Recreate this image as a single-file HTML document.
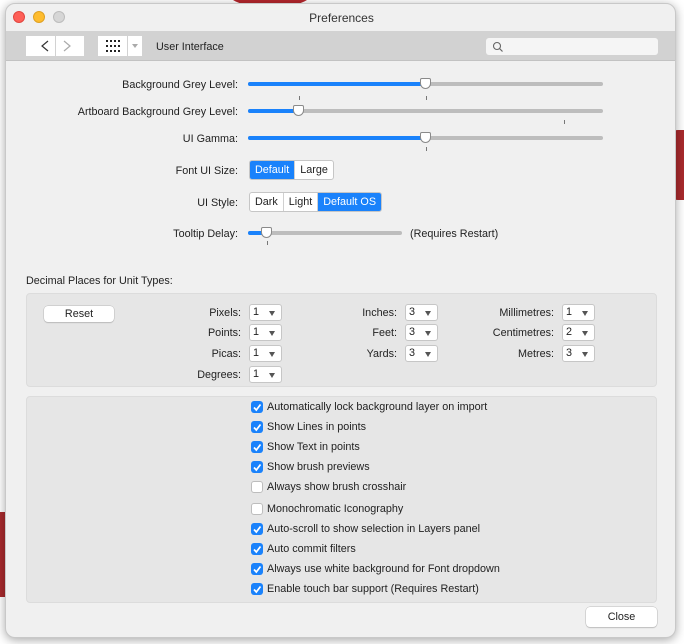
<!DOCTYPE html>
<html><head><meta charset="utf-8"><style>
*{box-sizing:border-box;margin:0;padding:0}
body{width:684px;height:644px;position:relative;background:#fff;font-family:"Liberation Sans",Arial,sans-serif;font-size:10.8px;color:#222;overflow:hidden}
.a{position:absolute}
.win{left:5px;top:3px;width:671px;height:635px;background:#f0f0f0;border-radius:10px;border:1px solid #c8c8c8;box-shadow:0 2px 10px rgba(0,0,0,.35);overflow:hidden}
.lbl{position:absolute;text-align:right;white-space:nowrap}
.track{position:absolute;height:4px;border-radius:2px;background:#bdbdbd}
.fill{position:absolute;height:4px;border-radius:2px;background:#1a82fb}
.thumb{position:absolute;width:11px;height:11px;background:#fff;border:1px solid #8a8a8a;border-radius:2px 2px 6px 6px}
.tick{position:absolute;width:1px;height:4px;background:#777}
.seg{position:absolute;display:flex;border:1px solid #c6c6c6;border-radius:3px;background:#fff;height:20px;overflow:hidden}
.seg div{padding:0 5px;line-height:18px;border-right:1px solid #d0d0d0}
.seg div:last-child{border-right:none}
.seg .on{background:#1a82fb;color:#fff}
.panel{position:absolute;left:20px;width:631px;background:#e6e6e6;border:1px solid #dcdcdc;border-radius:4px}
.dd{position:absolute;width:33px;height:17px;background:#fff;border:1px solid #c6c6c6;border-radius:3px;padding-left:3px;line-height:15px}
.dd:after{content:"";position:absolute;right:6px;top:6px;border-left:3px solid transparent;border-right:3px solid transparent;border-top:5px solid #555}
.cb{position:absolute;left:245px;width:12px;height:12px;border-radius:3px}
.cb.on{background:#1a82fb}
.cb.off{background:#fff;border:1px solid #bdbdbd}
.ct{position:absolute;left:261px;white-space:nowrap}
.btn{position:absolute;background:#fff;border-radius:4px;box-shadow:0 0 0 .5px #bbb,0 1px 1px rgba(0,0,0,.2);text-align:center}
</style></head><body>
<div class="a" style="left:230px;top:-20px;width:80px;height:26px;background:#b3262c;border-radius:40%"></div>
<div class="a" style="left:670px;top:130px;width:40px;height:70px;background:#a92a2d;border-radius:8px"></div>
<div class="a" style="left:0;top:512px;width:12px;height:85px;background:#a92a2d"></div>
<div class="a win">
 <div class="a" style="left:7px;top:7px;width:12px;height:12px;border-radius:50%;background:#fe5f57;border:.5px solid #e14640"></div>
 <div class="a" style="left:27px;top:7px;width:12px;height:12px;border-radius:50%;background:#febc2e;border:.5px solid #dea123"></div>
 <div class="a" style="left:47px;top:7px;width:12px;height:12px;border-radius:50%;background:#d6d6d6;border:.5px solid #bcbcbc"></div>
 <div class="a" style="left:0;top:7px;width:671px;text-align:center;font-size:12px;color:#333">Preferences</div>
 <div class="a" style="left:0;top:27px;width:671px;height:30px;background:#d2d2d2;border-bottom:1px solid #c2c2c2"></div>
 <div class="a" style="left:20px;top:32px;width:29px;height:20px;background:#fff"></div>
 <div class="a" style="left:50px;top:32px;width:28px;height:20px;background:#fff"></div>
 <svg class="a" style="left:20px;top:32px" width="58" height="20"><path d="M22 5 L16 10 L22 15" stroke="#333" fill="none" stroke-width="1.2"/><path d="M38 5 L44 10 L38 15" stroke="#aaa" fill="none" stroke-width="1.2"/></svg>
 <div class="a" style="left:92px;top:32px;width:29px;height:20px;background:#fff"></div>
 <div class="a" style="left:122px;top:32px;width:14px;height:20px;background:#fff"></div>
 <svg class="a" style="left:92px;top:32px" width="44" height="20"><g fill="#222">
 <rect x="8" y="4" width="2" height="2"/><rect x="12" y="4" width="2" height="2"/><rect x="16" y="4" width="2" height="2"/><rect x="20" y="4" width="2" height="2"/>
 <rect x="8" y="9" width="2" height="2"/><rect x="12" y="9" width="2" height="2"/><rect x="16" y="9" width="2" height="2"/><rect x="20" y="9" width="2" height="2"/>
 <rect x="8" y="14" width="2" height="2"/><rect x="12" y="14" width="2" height="2"/><rect x="16" y="14" width="2" height="2"/><rect x="20" y="14" width="2" height="2"/></g>
 <path d="M34 8 L40 8 L37 12Z" fill="#aaa"/></svg>
 <div class="a" style="left:150px;top:37px">User Interface</div>
 <div class="a" style="left:480px;top:34px;width:172px;height:17px;background:#f5f5f5;border-radius:3px"></div>
 <svg class="a" style="left:486px;top:37px" width="12" height="12"><circle cx="5" cy="5" r="3.5" stroke="#666" fill="none" stroke-width="1.1"/><path d="M7.5 7.5 L10.5 10.5" stroke="#666" stroke-width="1.2"/></svg>

 <div class="lbl" style="right:437px;top:75px">Background Grey Level:</div>
 <div class="track" style="left:242px;top:78px;width:355px"></div><div class="fill" style="left:242px;top:78px;width:178px"></div>
 <div class="thumb" style="left:414px;top:74px"></div><div class="tick" style="left:420px;top:92px"></div>
 <div class="lbl" style="right:437px;top:102px">Artboard Background Grey Level:</div>
 <div class="track" style="left:242px;top:105px;width:355px"></div><div class="fill" style="left:242px;top:105px;width:51px"></div>
 <div class="thumb" style="left:287px;top:101px"></div><div class="tick" style="left:293px;top:92px"></div><div class="tick" style="left:558px;top:116px"></div>
 <div class="lbl" style="right:437px;top:129px">UI Gamma:</div>
 <div class="track" style="left:242px;top:132px;width:355px"></div><div class="fill" style="left:242px;top:132px;width:178px"></div>
 <div class="thumb" style="left:414px;top:128px"></div><div class="tick" style="left:420px;top:143px"></div>

 <div class="lbl" style="right:437px;top:161px">Font UI Size:</div>
 <div class="seg" style="left:243px;top:156px"><div class="on">Default</div><div>Large</div></div>
 <div class="lbl" style="right:437px;top:193px">UI Style:</div>
 <div class="seg" style="left:243px;top:188px"><div>Dark</div><div>Light</div><div class="on">Default OS</div></div>
 <div class="lbl" style="right:437px;top:224px">Tooltip Delay:</div>
 <div class="track" style="left:242px;top:227px;width:154px"></div><div class="fill" style="left:242px;top:227px;width:19px"></div>
 <div class="thumb" style="left:255px;top:223px"></div><div class="tick" style="left:261px;top:237px"></div>
 <div class="a" style="left:404px;top:224px">(Requires Restart)</div>

 <div class="a" style="left:20px;top:271px">Decimal Places for Unit Types:</div>
 <div class="panel" style="top:289px;height:94px"></div>
 <div class="btn" style="left:38px;top:302px;width:70px;height:16px;line-height:16px">Reset</div>
 <div class="lbl" style="right:434px;top:303px">Pixels:</div><div class="dd" style="left:243px;top:300px">1</div>
 <div class="lbl" style="right:434px;top:323px">Points:</div><div class="dd" style="left:243px;top:320px">1</div>
 <div class="lbl" style="right:434px;top:344px">Picas:</div><div class="dd" style="left:243px;top:341px">1</div>
 <div class="lbl" style="right:434px;top:365px">Degrees:</div><div class="dd" style="left:243px;top:362px">1</div>
 <div class="lbl" style="right:278px;top:303px">Inches:</div><div class="dd" style="left:399px;top:300px">3</div>
 <div class="lbl" style="right:278px;top:323px">Feet:</div><div class="dd" style="left:399px;top:320px">3</div>
 <div class="lbl" style="right:278px;top:344px">Yards:</div><div class="dd" style="left:399px;top:341px">3</div>
 <div class="lbl" style="right:121px;top:303px">Millimetres:</div><div class="dd" style="left:556px;top:300px">1</div>
 <div class="lbl" style="right:121px;top:323px">Centimetres:</div><div class="dd" style="left:556px;top:320px">2</div>
 <div class="lbl" style="right:121px;top:344px">Metres:</div><div class="dd" style="left:556px;top:341px">3</div>

 <div class="panel" style="top:392px;height:207px"></div>
 <svg width="0" height="0" style="position:absolute"><defs><path id="ck" d="M3 6.5 L5.3 9 L9.5 3.5" stroke="#fff" stroke-width="1.7" fill="none"/></defs></svg>
 <div class="cb on" style="top:397px"><svg width="12" height="12"><use href="#ck"/></svg></div><div class="ct" style="top:397px">Automatically lock background layer on import</div>
 <div class="cb on" style="top:417px"><svg width="12" height="12"><use href="#ck"/></svg></div><div class="ct" style="top:417px">Show Lines in points</div>
 <div class="cb on" style="top:437px"><svg width="12" height="12"><use href="#ck"/></svg></div><div class="ct" style="top:437px">Show Text in points</div>
 <div class="cb on" style="top:457px"><svg width="12" height="12"><use href="#ck"/></svg></div><div class="ct" style="top:457px">Show brush previews</div>
 <div class="cb off" style="top:477px"></div><div class="ct" style="top:477px">Always show brush crosshair</div>
 <div class="cb off" style="top:499px"></div><div class="ct" style="top:499px">Monochromatic Iconography</div>
 <div class="cb on" style="top:519px"><svg width="12" height="12"><use href="#ck"/></svg></div><div class="ct" style="top:519px">Auto-scroll to show selection in Layers panel</div>
 <div class="cb on" style="top:539px"><svg width="12" height="12"><use href="#ck"/></svg></div><div class="ct" style="top:539px">Auto commit filters</div>
 <div class="cb on" style="top:559px"><svg width="12" height="12"><use href="#ck"/></svg></div><div class="ct" style="top:559px">Always use white background for Font dropdown</div>
 <div class="cb on" style="top:579px"><svg width="12" height="12"><use href="#ck"/></svg></div><div class="ct" style="top:579px">Enable touch bar support (Requires Restart)</div>

 <div class="btn" style="left:580px;top:603px;width:71px;height:20px;line-height:20px">Close</div>
</div>
</body></html>
